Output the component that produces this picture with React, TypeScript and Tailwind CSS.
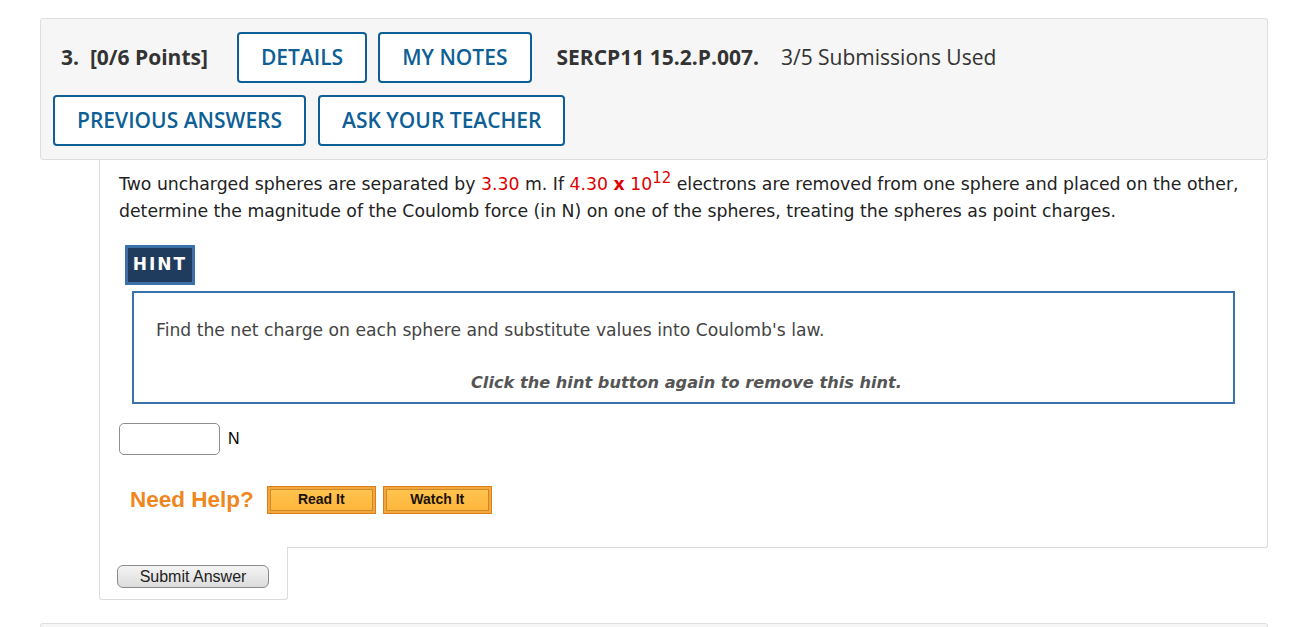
const sans = "font-['Open_Sans',sans-serif]";
const verdana = "font-['DejaVu_Sans',Verdana,sans-serif]";
const arial = "font-['Liberation_Sans',Arial,sans-serif]";

function OutlineButton({ children }: { children: React.ReactNode }) {
  return (
    <button
      type="button"
      className={`h-[51px] rounded-[4px] border-2 border-[#0e5f96] bg-white px-[22px] text-[21px] font-semibold text-[#0e5f96] ${sans}`}
    >
      {children}
    </button>
  );
}

function HelpButton({ label }: { label: string }) {
  return (
    <button
      type="button"
      className="h-[28px] w-[109px] border border-[#d9801c] bg-[#f6a53a] p-[2px]"
    >
      <span
        className={`flex h-full w-full items-center justify-center border border-[#c98a2c] bg-gradient-to-b from-[#ffc34d] to-[#fdb63c] text-[14px] font-bold text-[#1a1205] ${arial}`}
      >
        {label}
      </span>
    </button>
  );
}

function QuestionHeader() {
  return (
    <div className="flex flex-col gap-3 rounded-[3px] border border-[#dedede] bg-[#f6f6f6] px-3 py-[13px]">
      <div className="flex items-center gap-3">
        <span className={`pl-2 pr-[17px] text-[21px] font-bold text-[#333] ${sans}`}>
          3.&nbsp; [0/6 Points]
        </span>
        <OutlineButton>DETAILS</OutlineButton>
        <div className="-ml-[1px]">
          <OutlineButton>MY NOTES</OutlineButton>
        </div>
        <span className={`pl-[13px] text-[21px] text-[#333] ${sans}`}>
          <b>SERCP11 15.2.P.007.</b>
          <span className="ml-[22px]">3/5 Submissions Used</span>
        </span>
      </div>
      <div className="flex items-center gap-3">
        <OutlineButton>PREVIOUS ANSWERS</OutlineButton>
        <OutlineButton>ASK YOUR TEACHER</OutlineButton>
      </div>
    </div>
  );
}

export default function App() {
  return (
    <div className="h-[627px] overflow-hidden bg-white pt-[18px] pl-[40px] pr-[22px]">
      <QuestionHeader />

      <div className="ml-[59px] rounded-br-[3px] border-x border-b border-[#dcdcdc] bg-white pl-[19px] pr-[28px] pt-[11px] pb-[30px]">
        <p className={`text-[17.3px] leading-[27px] text-[#222] ${verdana}`}>
          Two uncharged spheres are separated by{" "}
          <span className="text-[#e00000]">3.30</span> m. If{" "}
          <span className="text-[#e00000]">
            4.30 <b>x</b> 10
            <span className="relative -top-[7px] text-[15px] leading-none">12</span>
          </span>{" "}
          electrons are removed from one sphere and placed on the other,
          determine the magnitude of the Coulomb force (in N) on one of the
          spheres, treating the spheres as point charges.
        </p>

        <button
          type="button"
          className={`mt-[20px] ml-[6px] flex h-[40px] w-[70px] items-center justify-center border-[3px] border-[#3c70a6] bg-[#1f3c5e] text-[17px] font-bold tracking-[2px] text-white ${verdana}`}
        >
          HINT
        </button>

        <div className="mt-[6px] ml-[13px] mr-[4px] border-2 border-[#3a72ad] pt-[25px] pb-[7px] pl-[22px] pr-4">
          <p className={`text-[17.2px] leading-[24px] text-[#444] ${verdana}`}>
            Find the net charge on each sphere and substitute values into
            Coulomb's law.
          </p>
          <p
            className={`mt-[29px] text-center text-[16.2px] font-bold italic leading-[24px] text-[#555] ${verdana}`}
          >
            Click the hint button again to remove this hint.
          </p>
        </div>

        <div className="mt-[19px] flex items-center gap-2">
          <input
            type="text"
            aria-label="answer"
            className="h-[32px] w-[101px] rounded-[5px] border border-[#8e8e8e] bg-white"
          />
          <span className={`text-[16px] text-black ${arial}`}>N</span>
        </div>

        <div className="mt-[28px] ml-[11px] flex items-center gap-[7px]">
          <span className={`mr-[6px] text-[22.5px] font-bold text-[#f0871e] ${arial}`}>
            Need Help?
          </span>
          <HelpButton label="Read It" />
          <HelpButton label="Watch It" />
        </div>
      </div>

      <div className="relative -mt-px ml-[59px] w-[189px] rounded-b-[3px] border-x border-b border-[#dcdcdc] bg-white pt-[17px] pb-[11px] pl-[17px]">
        <button
          type="button"
          className={`h-[23px] w-[152px] rounded-[6px] border border-[#8a8a8a] bg-gradient-to-b from-[#f4f4f4] to-[#dcdcdc] text-[16px] leading-none text-[#222] ${arial}`}
        >
          Submit Answer
        </button>
      </div>

      <div className="mt-[23px] h-[20px] rounded-t-[3px] border border-[#dedede] bg-[#f6f6f6]" />
    </div>
  );
}
